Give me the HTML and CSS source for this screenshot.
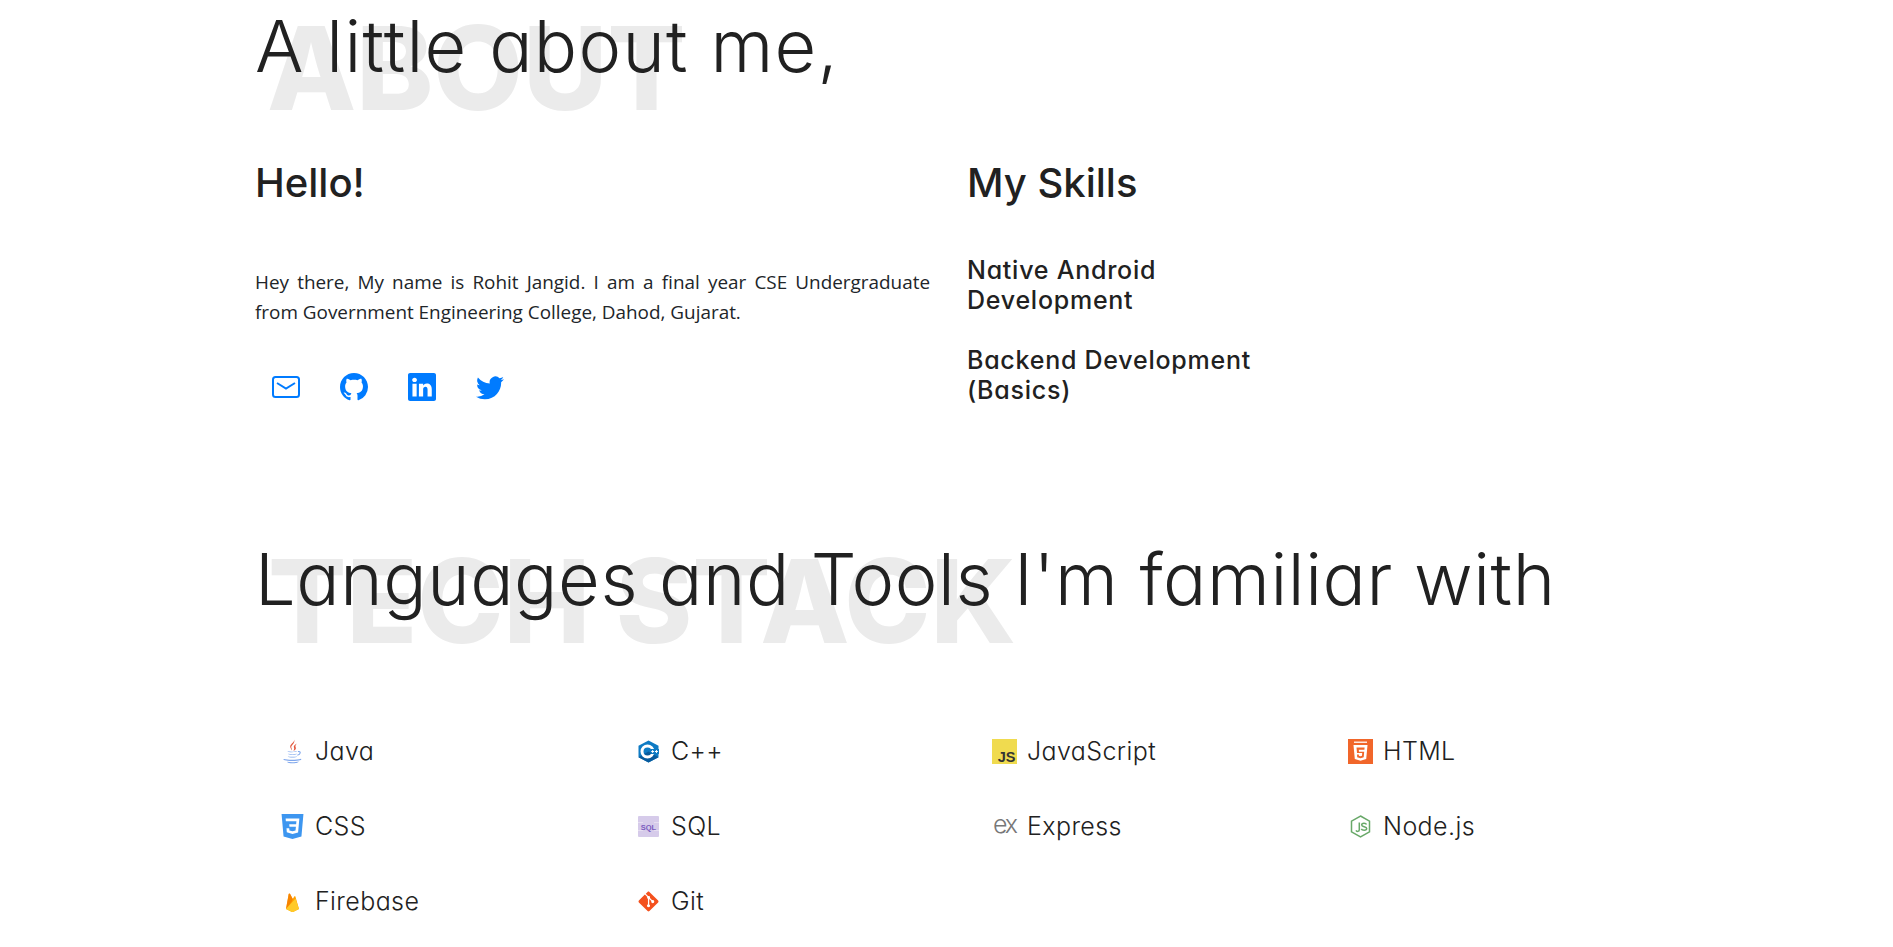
FILE: index.html
```html
<!DOCTYPE html>
<html lang="en">
<head>
<meta charset="utf-8">
<title>About</title>
<link rel="stylesheet" href="styles.css">
</head>
<body>
<main class="page">
  <section class="about">
    <div class="heading-wrap">
      <span class="ghost ghost-about">ABOUT</span>
      <h1 class="heading heading-about">A little about me,</h1>
    </div>
    <div class="about-row">
      <div class="intro">
        <h2 class="sub">Hello!</h2>
        <p class="bio">Hey there, My name is Rohit Jangid. I am a final year CSE Undergraduate from Government Engineering College, Dahod, Gujarat.</p>
        <div class="socials">
          <svg class="social" viewBox="0 0 28 28"><rect x="1" y="4" width="26" height="20" rx="2.500" fill="none" stroke="#007bff" stroke-width="2"/><path fill="none" stroke="#007bff" stroke-width="2" d="M5 10l9 5.500 9-5.500"/></svg>
          <svg class="social" viewBox="0 0 16 16"><path fill="#007bff" d="M8 0C3.58 0 0 3.58 0 8c0 3.54 2.29 6.53 5.47 7.59.4.07.55-.17.55-.38 0-.19-.01-.82-.01-1.49-2.01.37-2.53-.49-2.69-.94-.09-.23-.48-.94-.82-1.13-.28-.15-.68-.52-.01-.53.63-.01 1.08.58 1.23.82.72 1.21 1.87.87 2.33.66.07-.52.28-.87.51-1.07-1.78-.2-3.64-.89-3.64-3.95 0-.87.31-1.59.82-2.15-.08-.2-.36-1.02.08-2.12 0 0 .67-.21 2.2.82.64-.18 1.32-.27 2-.27.68 0 1.36.09 2 .27 1.53-1.04 2.2-.82 2.2-.82.44 1.1.16 1.92.08 2.12.51.56.82 1.27.82 2.15 0 3.07-1.87 3.75-3.65 3.95.29.25.54.73.54 1.48 0 1.07-.01 1.93-.01 2.2 0 .21.15.46.55.38A8.012 8.012 0 0 0 16 8c0-4.42-3.58-8-8-8z"/></svg>
          <svg class="social" viewBox="0 0 16 16"><path fill="#007bff" d="M0 1.146C0 .513.526 0 1.175 0h13.65C15.474 0 16 .513 16 1.146v13.708c0 .633-.526 1.146-1.175 1.146H1.175C.526 16 0 15.487 0 14.854V1.146zm4.943 12.248V6.169H2.542v7.225h2.401zm-1.2-8.212c.837 0 1.358-.554 1.358-1.248-.015-.709-.52-1.248-1.342-1.248-.822 0-1.359.54-1.359 1.248 0 .694.521 1.248 1.327 1.248h.016zm4.908 8.212V9.359c0-.216.016-.432.08-.586.173-.431.568-.878 1.232-.878.869 0 1.216.662 1.216 1.634v3.865h2.401V9.25c0-2.22-1.184-3.252-2.764-3.252-1.274 0-1.845.7-2.165 1.193v.025h-.016a5.54 5.54 0 0 1 .016-.025V6.169h-2.4c.03.678 0 7.225 0 7.225h2.4z"/></svg>
          <svg class="social" viewBox="0 0 16 16"><path fill="#007bff" d="M5.026 15c6.038 0 9.341-5.003 9.341-9.334 0-.14 0-.282-.006-.422A6.685 6.685 0 0 0 16 3.542a6.658 6.658 0 0 1-1.889.518 3.301 3.301 0 0 0 1.447-1.817 6.533 6.533 0 0 1-2.087.793A3.286 3.286 0 0 0 7.875 6.03a9.325 9.325 0 0 1-6.767-3.429 3.289 3.289 0 0 0 1.018 4.382A3.323 3.323 0 0 1 .64 6.575v.045a3.288 3.288 0 0 0 2.632 3.218 3.203 3.203 0 0 1-.865.115 3.23 3.23 0 0 1-.614-.057 3.283 3.283 0 0 0 3.067 2.277A6.588 6.588 0 0 1 .78 13.58a6.32 6.32 0 0 1-.78-.045A9.344 9.344 0 0 0 5.026 15z"/></svg>
        </div>
      </div>
      <div class="skills">
        <h2 class="sub">My Skills</h2>
        <h3 class="skill skill-first">Native Android Development</h3>
        <h3 class="skill">Backend Development (Basics)</h3>
      </div>
    </div>
  </section>

  <section class="tech">
    <div class="heading-wrap">
      <span class="ghost ghost-tech">TECH STACK</span>
      <h1 class="heading heading-tech">Languages and Tools I'm familiar with</h1>
    </div>
    <ul class="stack">
      <li class="item">
        <svg class="ico" viewBox="0 0 25 25">
          <path fill="#e2583e" d="M14 0c1.200 3-3.400 4.600-3.800 7.200-.2 1.500 1 2.700 1.800 4.300.2-1.800-1.200-2.700-.6-4.200C12.200 5.500 15.500 4 14 0z"/>
          <path fill="#e2583e" d="M17 4.500c-2.500 1.200-3.800 2.500-3 4.300.4 1 .2 1.800-.8 3 2.500-.8 3.200-2.300 2.400-3.900-.5-1-.1-1.900 1.400-3.400z"/>
          <path fill="#7ea6ec" d="M7.500 12.200c2.500.7 7.500.6 10-.2-.8 1.500-9.800 1.600-10 .2zM8 14.800c2.500.6 6.500.6 9 0-.5 1.300-8.500 1.300-9 0zm-.2 2.600c2.500.6 7 .6 9.400 0-.6 1.300-8.800 1.300-9.400 0zM4 20c3.500 1.100 13 1.100 17-.3 1.500 1-1.500 2.200-8.500 2.300C5.500 22 2 20.800 4 20zm3 2.800c3 .5 9 .5 12-.4-1 2.300-11 2.600-12 .4z"/>
          <path fill="none" stroke="#7ea6ec" stroke-width="1.100" d="M18 12.600c2.800-.6 3.300 2.300-.6 3.700"/>
        </svg>
        <span class="name">Java</span>
      </li>
      <li class="item">
        <svg class="ico" viewBox="0 0 25 25">
          <path fill="#0e7bc4" d="M12.500 1.500 22.500 6.800v11.400l-10 5.300-10-5.300V6.800z"/>
          <path fill="#075a9c" d="M12.500 12.500 22.500 18.200l-10 5.300-10-5.300z"/>
          <circle cx="11.500" cy="12.500" r="5.500" fill="none" stroke="#fff" stroke-width="3"/>
          <path fill="#0e7bc4" d="M15 10h8v5h-8z"/>
          <path fill="#fff" d="M15.200 12h1v-1h.9v1h1v.9h-1v1h-.9v-1h-1zm3.800 0h1v-1h.9v1h1v.9h-1v1h-.9v-1h-1z"/>
        </svg>
        <span class="name">C++</span>
      </li>
      <li class="item">
        <svg class="ico" viewBox="0 0 25 25">
          <rect width="25" height="25" fill="#f0db4f"/>
          <text class="js-text" x="23.500" y="23" text-anchor="end">JS</text>
        </svg>
        <span class="name">JavaScript</span>
      </li>
      <li class="item">
        <svg class="ico" viewBox="0 0 25 25">
          <rect width="25" height="25" fill="#f1662a"/>
          <path fill="#fff" d="M5.500 6h14l-1.300 14-5.700 1.700L6.800 20z"/>
          <path fill="#f1662a" d="M16.600 8.500H8.500l.5 5.500h5.200l-.2 2.800-1.500.5-1.600-.5-.1-1.300H9l.2 2.800 3.300 1 3.200-1 .5-5.500H11l-.2-2.100h5.600z"/>
          <rect x="6" y="2.500" width="13" height="1.500" fill="#fff" opacity=".85"/>
        </svg>
        <span class="name">HTML</span>
      </li>
      <li class="item">
        <svg class="ico" viewBox="0 0 24 24"><path fill="#3d96f0" d="M1.500 0h21l-1.910 21.563L11.977 24l-8.564-2.438L1.500 0zm17.090 4.413L5.410 4.410l.213 2.622 10.125.002-.255 2.716h-6.640l.24 2.573h6.182l-.366 3.523-2.910.804-2.956-.81-.188-2.110h-2.610l.290 3.855L12 19.288l5.373-1.530L18.590 4.414z"/></svg>
        <span class="name">CSS</span>
      </li>
      <li class="item">
        <svg class="ico" viewBox="0 0 25 25">
          <rect x="2" y="2" width="21" height="21" rx="1" fill="#d6cbea"/>
          <path stroke="#e8e2f3" stroke-width=".8" d="M2 8.500h5M18 8.500h5M2 16.500h5M18 16.500h5"/>
          <text class="sql-text" x="12.500" y="15.500" text-anchor="middle">SQL</text>
        </svg>
        <span class="name">SQL</span>
      </li>
      <li class="item">
        <svg class="ico ico-ex" viewBox="0 0 25 25"><text class="ex-text" x="12.500" y="18.500" text-anchor="middle">ex</text></svg>
        <span class="name">Express</span>
      </li>
      <li class="item">
        <svg class="ico" viewBox="0 0 25 25">
          <path fill="none" stroke="#68a868" stroke-width="1.500" d="M12.500 2 21.500 7.200v10.600l-9 5.200-9-5.200V7.200z"/>
          <path fill="none" stroke="#68a868" stroke-width="1.500" d="M11.300 8.500v7.300c0 2-2.700 2-3.300.6M18.500 10.500c-.6-1.600-4.800-1.800-4.800.4 0 2.300 5 1.200 5 3.600 0 2.400-4.700 2.100-5.400.4"/>
        </svg>
        <span class="name">Node.js</span>
      </li>
      <li class="item">
        <svg class="ico" viewBox="0 0 25 25">
          <path fill="#ffa000" d="M6 20 8.700 5c.2-.8 1-.8 1.400-.1l2.700 5.200 1.400-2.500c.3-.5 1-.5 1.200 0L19 20l-5.500 2.800a2 2 0 0 1-2 0z"/>
          <path fill="#f57c00" d="M11.500 13 6 20 8.700 5c.2-.8 1-.8 1.400-.1l2.700 5.200z" opacity=".8"/>
          <path fill="#ffca28" d="M6 20 15.500 9.500 19 20l-5.500 2.800a2 2 0 0 1-2 0z"/>
        </svg>
        <span class="name">Firebase</span>
      </li>
      <li class="item">
        <svg class="ico" viewBox="-3 -3 30 30"><path fill="#f4511e" d="M23.546 10.930L13.067.452c-.604-.603-1.582-.603-2.188 0L8.708 2.627l2.760 2.760c.645-.215 1.379-.07 1.889.441.516.515.658 1.258.438 1.900l2.658 2.660c.645-.223 1.387-.078 1.900.435.721.720.721 1.884 0 2.604-.719.719-1.881.719-2.600 0-.539-.541-.674-1.337-.404-1.996L12.860 8.955v6.525c.176.086.342.203.488.348.713.721.713 1.883 0 2.600-.719.721-1.889.721-2.609 0-.719-.719-.719-1.879 0-2.598.182-.18.387-.316.605-.406V8.835c-.217-.091-.424-.222-.6-.401-.545-.545-.676-1.342-.396-2.009L7.636 3.700.45 10.881c-.6.605-.6 1.584 0 2.189l10.480 10.477c.604.604 1.582.604 2.186 0l10.430-10.430c.605-.603.605-1.582 0-2.187"/></svg>
        <span class="name">Git</span>
      </li>
    </ul>
  </section>
</main>
</body>
</html>
```

FILE: styles.css
```css
* { box-sizing: border-box; }
html, body { margin: 0; padding: 0; background: #fff; overflow: hidden; }
body { height: 947px; color: #212121; font-family: "Inter", "Noto Sans", sans-serif; font-feature-settings: "cv11" 1; }
.page { padding-left: 255px; }
.heading-wrap { position: relative; }
.heading { position: relative; margin: 0; font-size: 72px; font-weight: 300; line-height: 92px; color: #212121; white-space: nowrap; }
.heading-about { letter-spacing: 1.3px; }
.heading-tech { letter-spacing: .6px; }
.ghost { position: absolute; font-weight: 800; font-size: 116px; line-height: 120px; color: #ebebeb; white-space: nowrap; }
.ghost-about { left: 12px; top: 8px; }
.ghost-tech { left: 13px; top: 8px; }
.about-row { display: flex; gap: 37px; margin-top: 67px; }
.intro { width: 675px; }
.sub { margin: 0; font-size: 40px; line-height: 48px; font-weight: 500; color: #212121; }
.bio { margin: 60px 0 0; font-family: "Open Sans", sans-serif; font-size: 18.900px; line-height: 30px; color: #212529; text-align: justify; font-feature-settings: normal; }
.socials { display: flex; gap: 40px; margin: 46px 0 0 17px; }
.social { width: 28px; height: 28px; display: block; }
.skills { width: 310px; }
.skill { margin: 0; font-size: 25px; line-height: 30px; font-weight: 500; letter-spacing: .75px; color: #212121; }
.skill-first { margin-top: 48px; margin-bottom: 30px; }
.tech { margin-top: 128px; }
.stack { list-style: none; margin: 114px 0 0 25px; padding: 0; display: grid; grid-template-columns: repeat(4, 356px); grid-auto-rows: 75px; }
.item { display: flex; align-items: center; gap: 10px; height: 25px; }
.ico { width: 25px; height: 25px; flex: none; display: block; }
.ico-ex { overflow: visible; }
.name { font-size: 25px; font-weight: 300; letter-spacing: .4px; color: #212121; line-height: 25px; }
.js-text { font-family: "Liberation Sans", sans-serif; font-size: 14.500px; font-weight: 700; fill: #333; }
.sql-text { font-family: "Liberation Sans", sans-serif; font-size: 7.500px; font-weight: 700; fill: #7a5bc0; }
.ex-text { font-family: "Inter", sans-serif; font-size: 25px; font-weight: 300; letter-spacing: -2px; fill: #777; }
```
